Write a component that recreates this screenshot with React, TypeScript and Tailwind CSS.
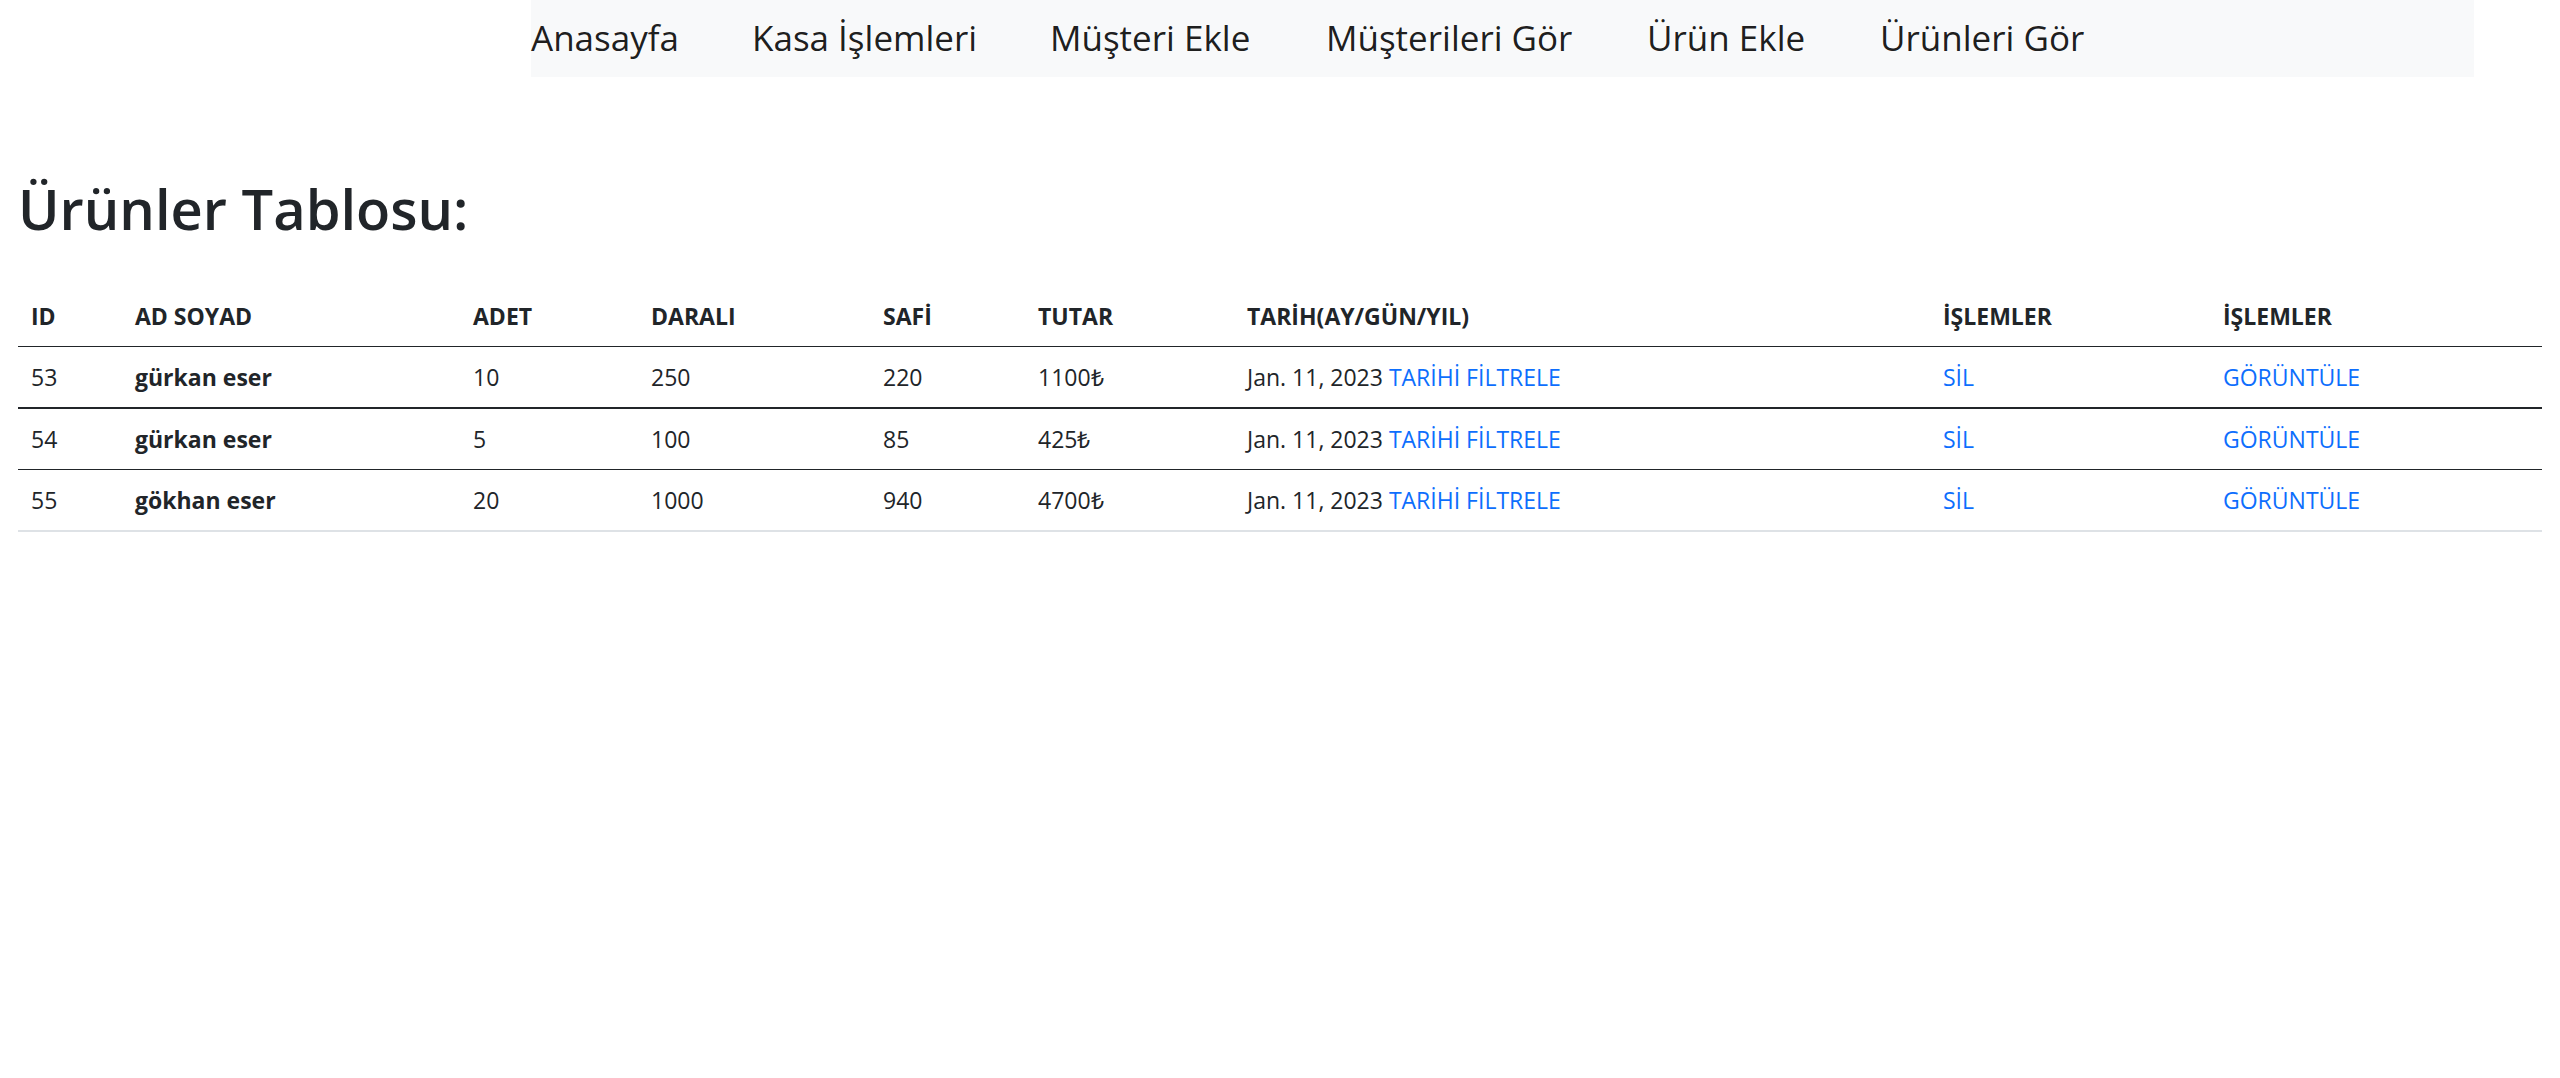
import React from 'react';

interface UrunRow {
  id: number;
  ad: string;
  adet: number;
  darali: number;
  safi: number;
  tutar: number;
  tarih: string;
}

const navItems = [
  { label: 'Anasayfa', w: 'w-[221px]' },
  { label: 'Kasa İşlemleri', w: 'w-[298px]' },
  { label: 'Müşteri Ekle', w: 'w-[276px]' },
  { label: 'Müşterileri Gör', w: 'w-[321px]' },
  { label: 'Ürün Ekle', w: 'w-[233px]' },
  { label: 'Ürünleri Gör', w: 'w-[300px]' },
];

const rows: UrunRow[] = [
  { id: 53, ad: 'gürkan eser', adet: 10, darali: 250, safi: 220, tutar: 1100, tarih: 'Jan. 11, 2023' },
  { id: 54, ad: 'gürkan eser', adet: 5, darali: 100, safi: 85, tutar: 425, tarih: 'Jan. 11, 2023' },
  { id: 55, ad: 'gökhan eser', adet: 20, darali: 1000, safi: 940, tutar: 4700, tarih: 'Jan. 11, 2023' },
];

// border under each body row: thick dark, thin dark, light gray
const rowBorders = [
  'border-b-2 border-[#212529]',
  'border-b border-[#212529]',
  'border-b-2 border-[#dee2e6]',
];

const App: React.FC = () => {
  return (
    <div className="min-h-screen w-full bg-white text-[#212529] font-['Open_Sans',sans-serif]">
      {/* Navbar */}
      <nav className="ml-[531px] w-[1943px] h-[77px] bg-[#f8f9fa] flex items-center">
        {navItems.map((item) => (
          <a key={item.label} className={`${item.w} shrink-0 text-[35px] leading-[52px] text-black/90 pb-[2px]`}>
            {item.label}
          </a>
        ))}
      </nav>

      <div className="px-[18px]">
        <h1 className="mt-[95px] text-[56px] leading-[72px] font-semibold">Ürünler Tablosu:</h1>

        <table className="mt-[42px] w-full table-fixed text-[23px] leading-[36px]">
          <colgroup>
            <col className="w-[104px]" />
            <col className="w-[338px]" />
            <col className="w-[178px]" />
            <col className="w-[232px]" />
            <col className="w-[155px]" />
            <col className="w-[209px]" />
            <col className="w-[696px]" />
            <col className="w-[280px]" />
            <col />
          </colgroup>
          <thead>
            <tr className="text-left">
              {['ID', 'AD SOYAD', 'ADET', 'DARALI', 'SAFİ', 'TUTAR', 'TARİH(AY/GÜN/YIL)', 'İŞLEMLER', 'İŞLEMLER'].map(
                (h, i) => (
                  <th key={i} className="px-[13px] py-[12px] font-bold border-b border-[#212529]">
                    {h}
                  </th>
                )
              )}
            </tr>
          </thead>
          <tbody>
            {rows.map((r, idx) => {
              const b = rowBorders[idx];
              return (
                <tr key={r.id}>
                  <td className={`px-[13px] py-[12px] ${b}`}>{r.id}</td>
                  <td className={`px-[13px] py-[12px] font-bold ${b}`}>{r.ad}</td>
                  <td className={`px-[13px] py-[12px] ${b}`}>{r.adet}</td>
                  <td className={`px-[13px] py-[12px] ${b}`}>{r.darali}</td>
                  <td className={`px-[13px] py-[12px] ${b}`}>{r.safi}</td>
                  <td className={`px-[13px] py-[12px] ${b}`}>{r.tutar}₺</td>
                  <td className={`px-[13px] py-[12px] whitespace-nowrap ${b}`}>
                    {r.tarih} <a className="text-[#0d6efd]">TARİHİ FİLTRELE</a>
                  </td>
                  <td className={`px-[13px] py-[12px] ${b}`}>
                    <a className="text-[#0d6efd]">SİL</a>
                  </td>
                  <td className={`px-[13px] py-[12px] ${b}`}>
                    <a className="text-[#0d6efd]">GÖRÜNTÜLE</a>
                  </td>
                </tr>
              );
            })}
          </tbody>
        </table>
      </div>
    </div>
  );
};

export default App;
